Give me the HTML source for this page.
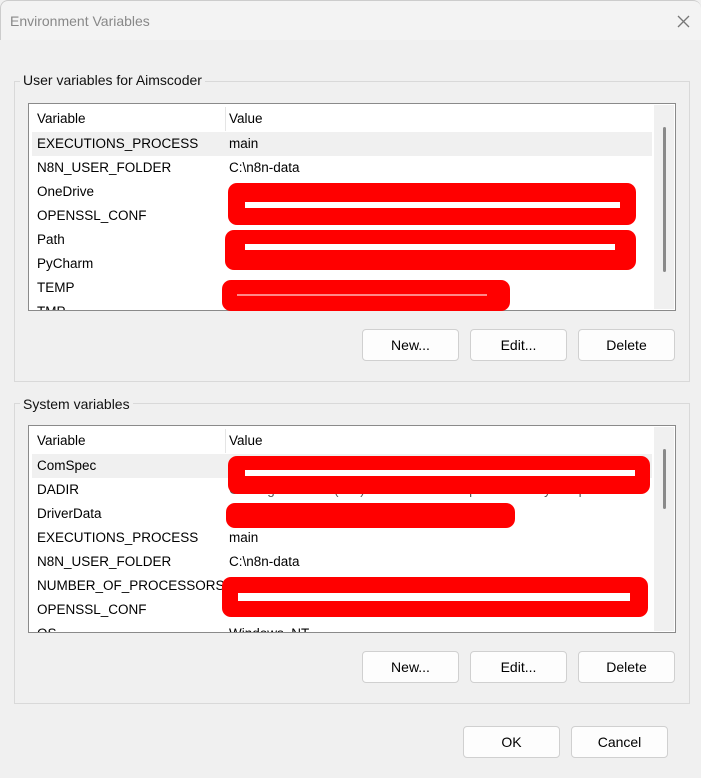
<!DOCTYPE html>
<html><head><meta charset="utf-8"><style>
*{margin:0;padding:0;box-sizing:border-box}
body{width:701px;height:778px;background:#f0f0f0;font-family:"Liberation Sans",sans-serif;font-size:14px;color:#000;position:relative;overflow:hidden}
.a{position:absolute}
.title{left:0;top:0;width:701px;height:40px;background:#f3f3f3;border-top:1px solid #ccc;border-left:1px solid #ccc;border-radius:8px 8px 0 0}
.title span{position:absolute;left:9px;top:12px;color:#888;font-size:14px}
.group{border:1px solid #d9d9d9}
.glabel{background:#f0f0f0;padding:0 3px;font-size:14px;color:#111}
.list{background:#fff;border:1px solid #8a8a8a;overflow:hidden}
.row{position:absolute;left:3px;height:24px;width:620px;line-height:24px;font-size:13.5px}
.row .v{position:absolute;left:5px}
.row .w{position:absolute;left:197px}
.hdr{border-right:1px solid #e5e5e5}
.sb{position:absolute;right:1px;top:1px;width:20px;bottom:1px;background:#f0f0f0}
.sb i{position:absolute;left:9px;width:3px;background:#8a8a8a;border-radius:2px}
.btn{position:absolute;height:32px;width:97px;background:#fdfdfd;border:1px solid #d0d0d0;border-radius:4px;text-align:center;line-height:30px;font-size:14px}
.red{position:absolute;background:#ff0000;border-radius:9px}
.red i{position:absolute;background:#fff;height:6px}
</style></head><body>
<div class="a title"><span>Environment Variables</span>
<svg class="a" style="left:676px;top:14px" width="13" height="13"><path d="M1 1L12 12M12 1L1 12" stroke="#777" stroke-width="1.3"/></svg></div>

<div class="a group" style="left:14px;top:81px;width:676px;height:301px"></div>
<div class="a glabel" style="left:20px;top:72px">User variables for Aimscoder</div>
<div class="a list" style="left:28px;top:103px;width:648px;height:208px">
 <div class="row" style="top:3px"><span class="v">Variable</span><span class="a hdr" style="left:193px;top:0;height:24px;width:1px"></span><span class="w">Value</span></div>
 <div class="row" style="top:28px;background:#f0f0f0"><span class="v">EXECUTIONS_PROCESS</span><span class="w">main</span></div>
 <div class="row" style="top:52px"><span class="v">N8N_USER_FOLDER</span><span class="w">C:\n8n-data</span></div>
 <div class="row" style="top:76px"><span class="v">OneDrive</span></div>
 <div class="row" style="top:100px"><span class="v">OPENSSL_CONF</span></div>
 <div class="row" style="top:124px"><span class="v">Path</span></div>
 <div class="row" style="top:148px"><span class="v">PyCharm</span></div>
 <div class="row" style="top:172px"><span class="v">TEMP</span></div>
 <div class="row" style="top:196px"><span class="v">TMP</span></div>
 <div class="sb"><i style="top:22px;height:145px"></i></div>
</div>
<div class="red" style="left:228px;top:183px;width:408px;height:42px"><i style="left:17px;top:19px;width:375px"></i></div>
<div class="red" style="left:225px;top:230px;width:411px;height:40px"><i style="left:20px;top:14px;width:370px"></i></div>
<div class="red" style="left:222px;top:280px;width:288px;height:31px"><i style="left:15px;top:14px;width:250px;height:2px;background:#f88"></i></div>
<div class="btn" style="left:362px;top:329px">New...</div>
<div class="btn" style="left:470px;top:329px">Edit...</div>
<div class="btn" style="left:578px;top:329px">Delete</div>

<div class="a group" style="left:14px;top:403px;width:676px;height:301px"></div>
<div class="a glabel" style="left:20px;top:396px">System variables</div>
<div class="a list" style="left:28px;top:425px;width:648px;height:208px">
 <div class="row" style="top:3px"><span class="v">Variable</span><span class="a hdr" style="left:193px;top:0;height:24px;width:1px"></span><span class="w">Value</span></div>
 <div class="row" style="top:28px;background:#f0f0f0"><span class="v">ComSpec</span></div>
 <div class="row" style="top:52px"><span class="v">DADIR</span><span class="w" style="color:#555">C:\Program Files (x86)\Check Point\Endpoint Security\Endpoi...</span></div>
 <div class="row" style="top:76px"><span class="v">DriverData</span></div>
 <div class="row" style="top:100px"><span class="v">EXECUTIONS_PROCESS</span><span class="w">main</span></div>
 <div class="row" style="top:124px"><span class="v">N8N_USER_FOLDER</span><span class="w">C:\n8n-data</span></div>
 <div class="row" style="top:148px"><span class="v">NUMBER_OF_PROCESSORS</span></div>
 <div class="row" style="top:172px"><span class="v">OPENSSL_CONF</span></div>
 <div class="row" style="top:196px"><span class="v">OS</span><span class="w">Windows_NT</span></div>
 <div class="sb"><i style="top:22px;height:60px"></i></div>
</div>
<div class="red" style="left:228px;top:456px;width:422px;height:38px"><i style="left:17px;top:14px;width:390px"></i></div>
<div class="red" style="left:226px;top:503px;width:289px;height:25px"></div>
<div class="red" style="left:222px;top:577px;width:426px;height:40px"><i style="left:16px;top:16px;width:392px;height:8px"></i></div>
<div class="btn" style="left:362px;top:651px">New...</div>
<div class="btn" style="left:470px;top:651px">Edit...</div>
<div class="btn" style="left:578px;top:651px">Delete</div>

<div class="btn" style="left:463px;top:726px">OK</div>
<div class="btn" style="left:571px;top:726px">Cancel</div>
</body></html>
